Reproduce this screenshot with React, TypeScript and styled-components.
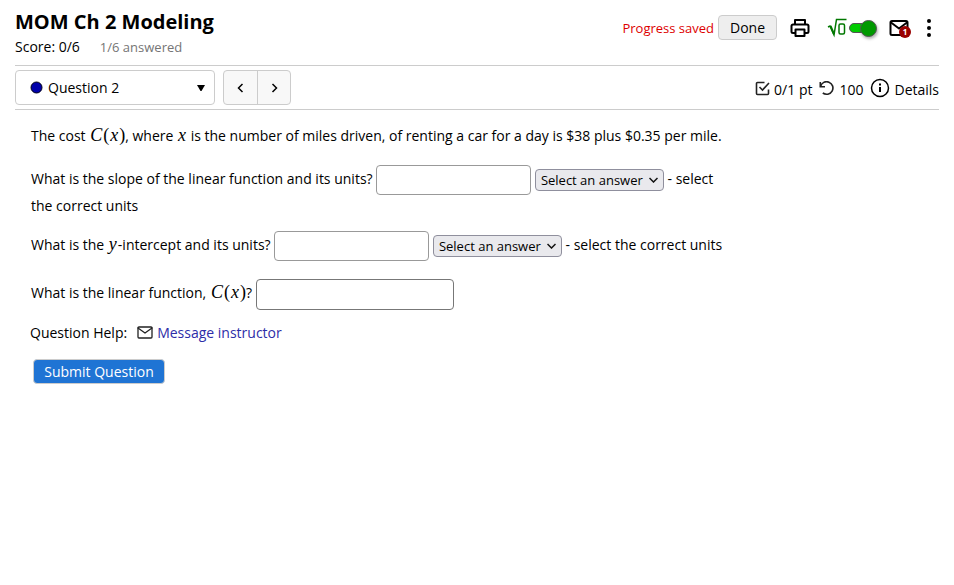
import React, { useState } from "react";
import styled, { createGlobalStyle } from "styled-components";

const GlobalStyle = createGlobalStyle`
  *, *::before, *::after { box-sizing: border-box; }
  body {
    margin: 0;
    background: #fff;
    color: #000;
    font-family: "Open Sans", sans-serif;
    font-size: 14px;
    line-height: 22px;
  }
  button, input, select { font: inherit; color: inherit; }
`;

const Page = styled.div`
  padding: 8px 15px;
`;

const Header = styled.header`
  display: flex;
  justify-content: space-between;
  align-items: flex-start;
  height: 58px;
  border-bottom: 1px solid #ccc;
`;

const Title = styled.h1`
  margin: 0;
  font-size: 20px;
  line-height: 27px;
  font-weight: 700;
`;

const Scores = styled.div`
  display: flex;
  gap: 20px;
  line-height: 24px;
`;

const Answered = styled.span`
  color: #757575;
  font-size: 13px;
`;

const Tools = styled.div`
  display: flex;
  align-items: center;
  padding-top: 7px;
`;

const Saved = styled.span`
  color: #d00;
  margin-right: 4px;
  font-size: 13px;
`;

const DoneButton = styled.button`
  width: 59px;
  height: 25px;
  padding: 0;
  margin-right: 13px;
  border: 1px solid #ccc;
  border-radius: 4px;
  background: #eee;
  line-height: 20px;
`;

const IconButton = styled.button`
  position: relative;
  display: flex;
  padding: 0;
  border: 0;
  background: none;
`;

const MathToggle = styled.label`
  display: flex;
  align-items: center;
  margin: 0 12px 0 17px;
`;

const Switch = styled.input`
  appearance: none;
  position: relative;
  width: 28px;
  height: 18px;
  margin: 0 0 0 2px;
  &::before {
    content: "";
    position: absolute;
    left: 0;
    top: 4px;
    width: 24px;
    height: 10px;
    border: 1px solid #555;
    border-radius: 5px;
    background: ${(p) => (p.checked ? "#0c0" : "#ccc")};
  }
  &::after {
    content: "";
    position: absolute;
    left: ${(p) => (p.checked ? "11px" : "0")};
    top: 1px;
    width: 17px;
    height: 17px;
    border: 1px solid #555;
    border-radius: 50%;
    background: ${(p) => (p.checked ? "#090" : "#eee")};
    box-shadow: 1px 2px 3px rgba(0, 0, 0, 0.3);
  }
`;

const Badge = styled.span`
  position: absolute;
  right: -2px;
  bottom: -1px;
  width: 12px;
  height: 12px;
  border-radius: 50%;
  background: #900;
  color: #fff;
  font-size: 8px;
  font-weight: 700;
  line-height: 12px;
  text-align: center;
`;

const MenuButton = styled(IconButton)`
  margin: 0 8px 0 18px;
`;

const QuestionBar = styled.nav`
  display: flex;
  align-items: center;
  height: 44px;
  border-bottom: 1px solid #ccc;
`;

const QuestionPicker = styled.button`
  display: flex;
  align-items: center;
  width: 200px;
  height: 35px;
  padding: 0 9px 0 14px;
  border: 1px solid #ccc;
  border-radius: 4px;
  background: #fff;
  gap: 5px;
`;

const PickerLabel = styled.span`
  flex: 1;
  text-align: left;
`;

const Pager = styled.div`
  display: flex;
  margin-left: 8px;
  border: 1px solid #ccc;
  border-radius: 4px;
  background: #f8f8f8;
`;

const PageButton = styled.button`
  display: flex;
  align-items: center;
  justify-content: center;
  width: 33px;
  height: 33px;
  padding: 0;
  border: 0;
  background: none;
  & + & {
    border-left: 1px solid #ccc;
  }
`;

const Facts = styled.div`
  display: flex;
  align-items: center;
  gap: 7px;
  margin-left: auto;
  padding-top: 4px;
`;

const Fact = styled.span`
  display: flex;
  align-items: center;
  gap: 4px;
`;

const DetailsButton = styled.button`
  display: flex;
  align-items: center;
  gap: 4px;
  padding: 0;
  border: 0;
  background: none;
`;

const RaisedIcon = styled.span<{ $by: number }>`
  display: flex;
  padding-bottom: ${(p) => p.$by}px;
`;

const Problem = styled.main`
  max-width: 732px;
  padding: 15px 16px 0;
`;

const Paragraph = styled.p<{ $gap?: number }>`
  margin: 0 0 ${(p) => p.$gap ?? 18}px;
`;

const MathText = styled.span`
  font-family: "Liberation Serif", serif;
  font-size: 18px;
  line-height: 20px;
  i {
    padding: 0 1px;
  }
`;

const AnswerBox = styled.input<{ $wide?: boolean }>`
  width: ${(p) => (p.$wide ? "198px" : "155px")};
  height: ${(p) => (p.$wide ? "31px" : "30px")};
  padding: 0 6px;
  border: 1px solid ${(p) => (p.$wide ? "#777" : "#999")};
  border-radius: 4px;
  background: #fff;
  vertical-align: middle;
`;

const SelectWrap = styled.span`
  position: relative;
  display: inline-block;
  vertical-align: middle;
  line-height: 0;
  svg {
    position: absolute;
    right: 6px;
    top: 8px;
    pointer-events: none;
  }
`;

const UnitSelect = styled.select`
  appearance: none;
  width: 129px;
  height: 22px;
  padding: 0 5px;
  border: 1px solid #8f8f9d;
  border-radius: 4px;
  background: #e9e9ed;
  font-size: 13px;
  line-height: 20px;
`;

const Help = styled.div`
  display: flex;
  align-items: center;
  padding-left: 15px;
`;

const MessageLink = styled.a`
  display: flex;
  align-items: center;
  gap: 4px;
  margin-left: 10px;
  color: #2d2da8;
  text-decoration: none;
`;

const LinkIcon = styled.span`
  display: flex;
  padding-bottom: 2px;
  color: #222;
`;

const SubmitButton = styled.button`
  display: block;
  width: 132px;
  height: 25px;
  margin: 15px 18px;
  padding: 0;
  border: 1px solid #ccc;
  border-radius: 4px;
  background: #1f74d4;
  color: #fff;
  line-height: 22px;
`;

const stroke = {
  fill: "none",
  stroke: "currentColor",
  strokeWidth: 2,
  strokeLinecap: "round" as const,
  strokeLinejoin: "round" as const,
};

const PrinterIcon = () => (
  <svg width="20" height="20" viewBox="0 0 20 20" {...stroke}>
    <path d="M5 6V2h10v4M5 15H3a1.500 1.500 0 0 1-1.500-1.500V8A1.500 1.500 0 0 1 3 6.500h14A1.500 1.500 0 0 1 18.500 8v5.500A1.500 1.500 0 0 1 17 15h-2" />
    <path d="M5.500 11.500h9V18h-9z" />
  </svg>
);

const RootIcon = () => (
  <svg width="20" height="20" viewBox="0 0 20 20" fill="none" stroke="#070">
    <path d="M1 9l2-1 4 9L9.500 1.500H19.500" strokeWidth="1.500" />
    <path d="M3.500 8l3.500 8" strokeWidth="2" />
    <rect x="12" y="6" width="5.500" height="10" rx="1.500" strokeWidth="1.500" />
  </svg>
);

const MailIcon = () => (
  <svg width="20" height="18" viewBox="0 0 20 18" {...stroke}>
    <rect x="1.500" y="2" width="17" height="14" rx="1.500" />
    <path d="M2 3.500l8 6 8-6" />
  </svg>
);

const EnvelopeIcon = () => (
  <svg width="16" height="13" viewBox="0 0 16 13" {...stroke} strokeWidth="1.300">
    <rect x="1" y="1" width="14" height="11" rx="1" />
    <path d="M1 2l7 5 7-5" />
  </svg>
);

const DotsIcon = () => (
  <svg width="4" height="18" viewBox="0 0 4 18" fill="#000">
    <circle cx="2" cy="2" r="2" />
    <circle cx="2" cy="9" r="2" />
    <circle cx="2" cy="16" r="2" />
  </svg>
);

const DotIcon = () => (
  <svg width="13" height="13" viewBox="0 0 13 13">
    <circle cx="6.500" cy="6.500" r="5.500" fill="#00a" stroke="#001" />
  </svg>
);

const CaretIcon = () => (
  <svg width="8" height="6" viewBox="0 0 8 6">
    <path d="M0 0h8L4.500 6h-1z" />
  </svg>
);

const ArrowIcon = ({ d }: { d: string }) => (
  <svg width="7" height="10" viewBox="0 0 7 10" fill="none" stroke="#000" strokeWidth="1.500">
    <path d={d} />
  </svg>
);

const CheckIcon = () => (
  <svg width="15" height="15" viewBox="0 0 15 15" fill="none" stroke="#222" strokeWidth="1.600">
    <path d="M9.500 1.500H2.500a1 1 0 0 0-1 1v10a1 1 0 0 0 1 1h10a1 1 0 0 0 1-1V8.500" />
    <path d="M4.500 6l3 3 6.500-7" />
  </svg>
);

const RetryIcon = () => (
  <svg width="16" height="15" viewBox="0 0 16 15" fill="none" stroke="#222" strokeWidth="1.600">
    <path d="M1.300 1v4.700h4.700" />
    <path d="M1.500 5.500A6.300 6.300 0 1 1 3.800 12" />
  </svg>
);

const InfoIcon = () => (
  <svg width="20" height="20" viewBox="0 0 20 20" fill="none" stroke="#000" strokeWidth="1.500">
    <circle cx="10" cy="10" r="8.500" />
    <path d="M10 9v5M10 5.500v2" strokeWidth="2" />
  </svg>
);

const ChevronIcon = () => (
  <svg width="9" height="6" viewBox="0 0 9 6" fill="none" stroke="#111" strokeWidth="1.500">
    <path d="M.5 1l4 4 4-4" />
  </svg>
);

const UnitPicker = ({ label }: { label: string }) => (
  <SelectWrap>
    <UnitSelect aria-label={label}>
      <option>Select an answer</option>
    </UnitSelect>
    <ChevronIcon />
  </SelectWrap>
);

const CofX = () => (
  <MathText>
    <i>C</i>(<i>x</i>)
  </MathText>
);

export default function App() {
  const [mathOn, setMathOn] = useState(true);
  return (
    <Page>
      <GlobalStyle />
      <Header>
        <div>
          <Title>MOM Ch 2 Modeling</Title>
          <Scores>
            <span>Score: 0/6</span>
            <Answered>1/6 answered</Answered>
          </Scores>
        </div>
        <Tools>
          <Saved>Progress saved</Saved>
          <DoneButton>Done</DoneButton>
          <IconButton aria-label="Print">
            <PrinterIcon />
          </IconButton>
          <MathToggle>
            <RootIcon />
            <Switch
              type="checkbox"
              role="switch"
              aria-label="Math display"
              checked={mathOn}
              onChange={(e) => setMathOn(e.target.checked)}
            />
          </MathToggle>
          <IconButton aria-label="Messages">
            <MailIcon />
            <Badge>1</Badge>
          </IconButton>
          <MenuButton aria-label="More options">
            <DotsIcon />
          </MenuButton>
        </Tools>
      </Header>
      <QuestionBar>
        <QuestionPicker aria-haspopup="listbox">
          <DotIcon />
          <PickerLabel>Question 2</PickerLabel>
          <CaretIcon />
        </QuestionPicker>
        <Pager>
          <PageButton aria-label="Previous question">
            <ArrowIcon d="M5.500 1l-4 4 4 4" />
          </PageButton>
          <PageButton aria-label="Next question">
            <ArrowIcon d="M1.500 1l4 4-4 4" />
          </PageButton>
        </Pager>
        <Facts>
          <Fact>
            <RaisedIcon $by={2}>
              <CheckIcon />
            </RaisedIcon>
            0/1 pt
          </Fact>
          <Fact>
            <RaisedIcon $by={2}>
              <RetryIcon />
            </RaisedIcon>
            100
          </Fact>
          <DetailsButton>
            <RaisedIcon $by={4}>
              <InfoIcon />
            </RaisedIcon>
            Details
          </DetailsButton>
        </Facts>
      </QuestionBar>
      <Problem>
        <Paragraph>
          The cost <CofX />, where <MathText><i>x</i></MathText> is the number of miles driven, of
          renting a car for a day is $38 plus $0.35 per mile.
        </Paragraph>
        <Paragraph $gap={14}>
          <label htmlFor="slope">What is the slope of the linear function and its units?</label>{" "}
          <AnswerBox id="slope" type="text" /> <UnitPicker label="Slope units" /> - select the
          correct units
        </Paragraph>
        <Paragraph>
          <label htmlFor="intercept">
            What is the <MathText><i>y</i></MathText>-intercept and its units?
          </label>{" "}
          <AnswerBox id="intercept" type="text" /> <UnitPicker label="Intercept units" /> - select
          the correct units
        </Paragraph>
        <Paragraph $gap={12}>
          <label htmlFor="function">
            What is the linear function, <CofX />?
          </label>{" "}
          <AnswerBox id="function" type="text" $wide />
        </Paragraph>
      </Problem>
      <Help>
        Question Help:
        <MessageLink href="#message">
          <LinkIcon>
            <EnvelopeIcon />
          </LinkIcon>
          Message instructor
        </MessageLink>
      </Help>
      <SubmitButton>Submit Question</SubmitButton>
    </Page>
  );
}
